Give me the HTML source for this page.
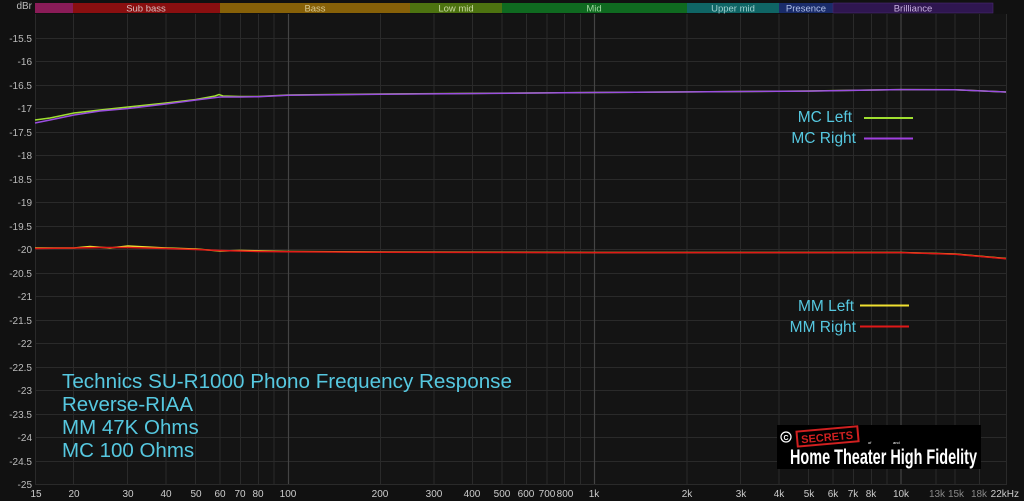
<!DOCTYPE html>
<html><head><meta charset="utf-8"><style>
html,body{margin:0;padding:0;background:#111;width:1024px;height:501px;overflow:hidden}
svg{display:block}
text{font-family:"Liberation Sans",sans-serif}
</style></head><body>
<svg width="1024" height="501" viewBox="0 0 1024 501">
<rect width="1024" height="501" fill="#111"/>
<rect x="35" y="14" width="972" height="470" fill="#141414"/>
<g stroke="#2a2a2a" stroke-width="1">
<line x1="35" x2="1007" y1="38.5" y2="38.5"/><line x1="35" x2="1007" y1="61.5" y2="61.5"/><line x1="35" x2="1007" y1="85.5" y2="85.5"/><line x1="35" x2="1007" y1="108.5" y2="108.5"/><line x1="35" x2="1007" y1="132.5" y2="132.5"/><line x1="35" x2="1007" y1="155.5" y2="155.5"/><line x1="35" x2="1007" y1="179.5" y2="179.5"/><line x1="35" x2="1007" y1="202.5" y2="202.5"/><line x1="35" x2="1007" y1="226.5" y2="226.5"/><line x1="35" x2="1007" y1="249.5" y2="249.5"/><line x1="35" x2="1007" y1="273.5" y2="273.5"/><line x1="35" x2="1007" y1="296.5" y2="296.5"/><line x1="35" x2="1007" y1="320.5" y2="320.5"/><line x1="35" x2="1007" y1="343.5" y2="343.5"/><line x1="35" x2="1007" y1="367.5" y2="367.5"/><line x1="35" x2="1007" y1="390.5" y2="390.5"/><line x1="35" x2="1007" y1="414.5" y2="414.5"/><line x1="35" x2="1007" y1="437.5" y2="437.5"/><line x1="35" x2="1007" y1="461.5" y2="461.5"/><line x1="35" x2="1007" y1="484.5" y2="484.5"/>
<line y1="14" y2="484" x1="35.5" x2="35.5"/><line y1="14" y2="484" x1="73.5" x2="73.5"/><line y1="14" y2="484" x1="127.5" x2="127.5"/><line y1="14" y2="484" x1="166" x2="166"/><line y1="14" y2="484" x1="195.5" x2="195.5"/><line y1="14" y2="484" x1="220" x2="220"/><line y1="14" y2="484" x1="240.5" x2="240.5"/><line y1="14" y2="484" x1="258.5" x2="258.5"/><line y1="14" y2="484" x1="274" x2="274"/><line y1="14" y2="484" x1="380.5" x2="380.5"/><line y1="14" y2="484" x1="434" x2="434"/><line y1="14" y2="484" x1="472.5" x2="472.5"/><line y1="14" y2="484" x1="502" x2="502"/><line y1="14" y2="484" x1="526.5" x2="526.5"/><line y1="14" y2="484" x1="547" x2="547"/><line y1="14" y2="484" x1="564.5" x2="564.5"/><line y1="14" y2="484" x1="580.5" x2="580.5"/><line y1="14" y2="484" x1="687" x2="687"/><line y1="14" y2="484" x1="740.5" x2="740.5"/><line y1="14" y2="484" x1="779" x2="779"/><line y1="14" y2="484" x1="808.5" x2="808.5"/><line y1="14" y2="484" x1="833" x2="833"/><line y1="14" y2="484" x1="853.5" x2="853.5"/><line y1="14" y2="484" x1="871.5" x2="871.5"/><line y1="14" y2="484" x1="887" x2="887"/><line y1="14" y2="484" x1="936" x2="936"/><line y1="14" y2="484" x1="955" x2="955"/><line y1="14" y2="484" x1="979.5" x2="979.5"/><line y1="14" y2="484" x1="1006.5" x2="1006.5"/>
</g>
<g stroke="#444" stroke-width="1.2"><line y1="14" y2="484" x1="288.5" x2="288.5"/><line y1="14" y2="484" x1="594.5" x2="594.5"/><line y1="14" y2="484" x1="901" x2="901"/></g>
<rect x="35" y="3" width="38" height="10" fill="#8a1c58"/>
<rect x="73" y="3" width="147" height="10" fill="#8a0f10"/>
<rect x="220" y="3" width="190" height="10" fill="#876108"/>
<rect x="410" y="3" width="92" height="10" fill="#4d7310"/>
<rect x="502" y="3" width="185" height="10" fill="#0f6a20"/>
<rect x="687" y="3" width="92" height="10" fill="#0f6565"/>
<rect x="779" y="3" width="54" height="10" fill="#1a2c6a"/>
<rect x="833" y="3" width="160" height="10" fill="#2f1650" stroke="#4a2a70" stroke-width="0.6"/>
<g font-size="9.5" fill="#d8c0c0" text-anchor="middle">
<text x="146" y="11.5">Sub bass</text><text x="315" y="11.5" fill="#d8c890">Bass</text><text x="456" y="11.5" fill="#c8d8a0">Low mid</text><text x="594" y="11.5" fill="#a0d8a0">Mid</text><text x="733" y="11.5" fill="#a0d0d0">Upper mid</text><text x="806" y="11.5" fill="#b0c0e8">Presence</text><text x="913" y="11.5" fill="#c8b0e0">Brilliance</text>
</g>
<g font-size="10" fill="#bbb" text-anchor="end">
<text x="32" y="9">dBr</text>
<text x="32" y="42">-15.5</text><text x="32" y="65">-16</text><text x="32" y="89">-16.5</text><text x="32" y="112">-17</text><text x="32" y="136">-17.5</text><text x="32" y="159">-18</text><text x="32" y="183">-18.5</text><text x="32" y="206">-19</text><text x="32" y="230">-19.5</text><text x="32" y="253">-20</text><text x="32" y="277">-20.5</text><text x="32" y="300">-21</text><text x="32" y="324">-21.5</text><text x="32" y="347">-22</text><text x="32" y="371">-22.5</text><text x="32" y="394">-23</text><text x="32" y="418">-23.5</text><text x="32" y="441">-24</text><text x="32" y="465">-24.5</text><text x="32" y="488">-25</text>
</g>
<g font-size="10" fill="#ccc" text-anchor="middle">
<text x="36" y="497">15</text><text x="74" y="497">20</text><text x="128" y="497">30</text><text x="166" y="497">40</text><text x="196" y="497">50</text><text x="220" y="497">60</text><text x="240" y="497">70</text><text x="258" y="497">80</text><text x="288" y="497">100</text><text x="380" y="497">200</text><text x="434" y="497">300</text><text x="472" y="497">400</text><text x="502" y="497">500</text><text x="526" y="497">600</text><text x="547" y="497">700</text><text x="565" y="497">800</text><text x="594" y="497">1k</text><text x="687" y="497">2k</text><text x="741" y="497">3k</text><text x="779" y="497">4k</text><text x="809" y="497">5k</text><text x="833" y="497">6k</text><text x="853" y="497">7k</text><text x="871" y="497">8k</text><text x="901" y="497">10k</text><text x="937" y="497" fill="#888">13k</text><text x="956" y="497" fill="#888">15k</text><text x="979" y="497" fill="#888">18k</text><text x="1019" y="497" text-anchor="end">22kHz</text>
</g>
<polyline fill="none" stroke="#a0e030" stroke-width="1.5" points="35,120 50,118 74,113 100,110 128,107 166,103 196,99.5 215,96 219,94.5 223,96 240,96.5 258,96.5 288,95 380,94 594,92.5 808,91 901,89.6 955,89.8 1006,92"/>
<polyline fill="none" stroke="#9a4ee0" stroke-width="1.5" points="35,123 50,120 74,115 100,111 128,108.5 166,104 196,100 220,97 240,97 258,96.7 288,95.3 380,94.3 594,92.5 808,91.1 901,89.6 955,89.8 1006,92"/>
<polyline fill="none" stroke="#f0e030" stroke-width="1.5" points="35,248 74,248 90,246.5 110,248 128,246 166,248 196,249 220,251 240,250.5 288,251.5 380,252 594,252.5 901,252.5 955,254 1006,258.5"/>
<polyline fill="none" stroke="#e01818" stroke-width="1.5" points="35,248.5 74,248 100,247.5 128,247.5 166,248.5 196,249.5 220,250.5 258,251.5 288,251.8 380,252.3 594,252.6 901,252.6 955,254.2 1006,258.7"/>
<g font-size="15.5" fill="#56c8e0" text-anchor="end">
<text x="852" y="122">MC Left</text><text x="856" y="143">MC Right</text><text x="854" y="311">MM Left</text><text x="856" y="332">MM Right</text>
</g>
<line x1="864" x2="913" y1="118" y2="118" stroke="#a0e030" stroke-width="2"/>
<line x1="864" x2="913" y1="138.5" y2="138.5" stroke="#a040e0" stroke-width="2"/>
<line x1="860" x2="909" y1="305.5" y2="305.5" stroke="#f0e030" stroke-width="2"/>
<line x1="860" x2="909" y1="326.5" y2="326.5" stroke="#e01818" stroke-width="2"/>
<g font-size="20.5" fill="#56c8e0">
<text x="62" y="388" textLength="450" lengthAdjust="spacingAndGlyphs">Technics SU-R1000 Phono Frequency Response</text>
<text x="62" y="411">Reverse-RIAA</text>
<text x="62" y="434">MM 47K Ohms</text>
<text x="62" y="457">MC 100 Ohms</text>
</g>
<rect x="777" y="425" width="204" height="44" fill="#000"/>
<circle cx="786" cy="437" r="5" fill="none" stroke="#fff" stroke-width="1.2"/>
<text x="786" y="440" font-size="7" fill="#fff" text-anchor="middle" font-weight="bold">C</text>
<rect x="797" y="429" width="61" height="15" fill="none" stroke="#d02020" stroke-width="2" transform="rotate(-5 827 436)"/>
<text x="827" y="441" font-size="11" fill="#d02020" text-anchor="middle" font-weight="bold" font-family="Liberation Serif" transform="rotate(-5 827 436)">SECRETS</text>
<text x="868" y="444" font-size="4" fill="#fff">of</text>
<text x="893" y="444" font-size="4" fill="#fff">and</text>
<text x="790" y="464" font-size="21" fill="#fff" font-weight="bold" textLength="187" lengthAdjust="spacingAndGlyphs">Home Theater High Fidelity</text>
</svg>
</body></html>
